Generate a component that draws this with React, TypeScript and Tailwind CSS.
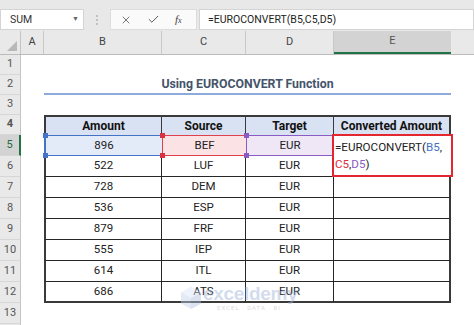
import { X, Check } from "lucide-react";

const data = [
  ["896", "BEF"],
  ["522", "LUF"],
  ["728", "DEM"],
  ["536", "ESP"],
  ["879", "FRF"],
  ["555", "IEP"],
  ["614", "ITL"],
  ["686", "ATS"],
];

const font = { fontFamily: "Roboto, 'Liberation Sans', sans-serif" };

function RowHead({ n, active, h }: { n?: number; active?: boolean; h: string }) {
  return (
    <div
      className={`${h} w-[21px] shrink-0 flex items-center justify-center border-b border-[#d6d6d6] text-[11px] ${
        active
          ? "bg-[#d3d3d3] text-[#1e6b41] border-r-2 border-r-[#217346]"
          : "bg-[#e9e9e9] text-[#555] border-r border-r-[#c4c4c4]"
      }`}
    >
      {n}
    </div>
  );
}

function Corner({ color, pos }: { color: string; pos: "tl" | "bl" }) {
  return (
    <span
      className={`absolute left-[-3px] h-[5px] w-[5px] ${color} ${
        pos === "tl" ? "top-[-3px]" : "bottom-[-3px]"
      }`}
    />
  );
}

export default function App() {
  const emptyRow = (key: number, h: string, n?: number) => (
    <div key={key} className="flex">
      <RowHead n={n} h={h} />
      <div className={`${h} flex-1 bg-white`} />
    </div>
  );

  return (
    <div className="relative h-[325px] w-[474px] overflow-hidden bg-white" style={font}>
      {/* formula bar */}
      <div className="flex h-[31px] items-end bg-[#e8e8e8] pb-[1px]">
        <div className="flex h-[21px] w-[84px] items-center justify-between border border-[#d4d4d4] bg-white pl-[9px] pr-[4px] text-[10.5px] text-[#333]">
          SUM
          <span className="text-[7px] text-[#666]">▼</span>
        </div>
        <div className="flex h-[21px] w-[26px] flex-col items-center justify-center gap-[2px]">
          <span className="h-[2px] w-[2px] rounded-full bg-[#b5b5b5]" />
          <span className="h-[2px] w-[2px] rounded-full bg-[#b5b5b5]" />
          <span className="h-[2px] w-[2px] rounded-full bg-[#b5b5b5]" />
        </div>
        <div className="flex h-[21px] w-[87px] items-center border border-[#dcdcdc] bg-[#fafafa] pl-[9px] text-[#555]">
          <X size={12} strokeWidth={1.6} />
          <Check size={13} strokeWidth={1.8} className="ml-[15px]" />
          <span
            className="ml-[15px] text-[11px] italic text-[#444]"
            style={{ fontFamily: "'Liberation Serif', serif" }}
          >
            f<span className="text-[8px]">x</span>
          </span>
        </div>
        <div className="ml-[2px] flex h-[21px] flex-1 items-center border border-[#d4d4d4] bg-white pl-[8px] text-[10.5px] text-[#222]">
          =EUROCONVERT(B5,C5,D5)
        </div>
      </div>

      {/* column headers */}
      <div className="flex h-[24px] border-b border-[#bcbcbc] bg-[#e9e9e9] text-[11px] text-[#444]">
        <div className="relative w-[21px] border-r border-[#c4c4c4]">
          <svg className="absolute bottom-[3px] right-[3px]" width="10" height="10" viewBox="0 0 10 10">
            <polygon points="10,0 10,10 0,10" fill="#b8b8b8" />
          </svg>
        </div>
        <div className="flex w-[23px] items-center justify-center border-r border-[#c8c8c8]">A</div>
        <div className="flex w-[118px] items-center justify-center border-r border-[#c8c8c8]">B</div>
        <div className="flex w-[84px] items-center justify-center border-r border-[#c8c8c8]">C</div>
        <div className="flex w-[88px] items-center justify-center border-r border-[#c8c8c8]">D</div>
        <div className="flex w-[117px] items-center justify-center border-b-2 border-b-[#217346] bg-[#d3d3d3] text-[#555]">
          E
        </div>
        <div className="flex-1" />
      </div>

      {/* rows 1-3 */}
      {emptyRow(1, "h-[20px]", 1)}
      <div className="flex">
        <RowHead n={2} h="h-[20px]" />
        <div className="h-[20px] w-[23px]" />
        <div className="flex h-[20px] w-[407px] items-center justify-center border-b-2 border-[#8eaadb] pt-[1px] text-[12.3px] font-bold text-[#44546a]">
          Using EUROCONVERT Function
        </div>
        <div className="flex-1" />
      </div>
      {emptyRow(3, "h-[20px]", 3)}

      {/* table header row 4 */}
      <div className="flex text-[12px] font-bold text-[#111]">
        <RowHead n={4} h="h-[20px]" />
        <div className="h-[20px] w-[23px]" />
        <div className="flex h-[20px] w-[118px] items-center justify-center border-t-2 border-l-2 border-r border-[#3a3a3a] bg-[#d9e2f3]">
          Amount
        </div>
        <div className="flex h-[20px] w-[84px] items-center justify-center border-t-2 border-r border-[#3a3a3a] bg-[#d9e2f3]">
          Source
        </div>
        <div className="flex h-[20px] w-[88px] items-center justify-center border-t-2 border-r border-[#3a3a3a] bg-[#d9e2f3]">
          Target
        </div>
        <div className="flex h-[20px] w-[117px] items-center justify-center border-t-2 border-r-2 border-[#3a3a3a] bg-[#d9e2f3]">
          Converted Amount
        </div>
        <div className="flex-1" />
      </div>

      {/* data rows 5-12 */}
      {data.map(([amt, src], i) => {
        const n = i + 5;
        const first = i === 0;
        const last = i === data.length - 1;
        const bb = last ? "border-b-2 border-b-[#3a3a3a]" : "border-b border-b-[#262626]";
        return (
          <div key={n} className="flex text-[11.5px] text-[#222]">
            <RowHead n={n} h="h-[21px]" active={first} />
            <div className="h-[21px] w-[23px]" />
            {first ? (
              <>
                <div className="relative flex h-[21px] w-[118px] items-center justify-center border-y border-l-2 border-[#4472c4] bg-[#e3ebf8]">
                  {amt}
                  <Corner color="bg-[#4472c4]" pos="tl" />
                  <Corner color="bg-[#4472c4]" pos="bl" />
                </div>
                <div className="relative flex h-[21px] w-[84px] items-center justify-center border-y border-l border-[#e0404c] bg-[#fbe3e5]">
                  {src}
                  <Corner color="bg-[#d93343]" pos="tl" />
                  <Corner color="bg-[#d93343]" pos="bl" />
                </div>
                <div className="relative flex h-[21px] w-[88px] items-center justify-center border border-[#8a5bc2] bg-[#efe7f6]">
                  EUR
                  <Corner color="bg-[#8a5bc2]" pos="tl" />
                  <Corner color="bg-[#8a5bc2]" pos="bl" />
                </div>
                <div className="h-[21px] w-[117px] border-r-2 border-b border-[#3a3a3a]" />
              </>
            ) : (
              <>
                <div className={`flex h-[21px] w-[118px] items-center justify-center border-l-2 border-l-[#3a3a3a] border-r border-r-[#262626] ${bb}`}>
                  {amt}
                </div>
                <div className={`flex h-[21px] w-[84px] items-center justify-center border-r border-r-[#262626] ${bb}`}>
                  {src}
                </div>
                <div className={`flex h-[21px] w-[88px] items-center justify-center border-r border-r-[#262626] ${bb}`}>
                  EUR
                </div>
                <div className={`h-[21px] w-[117px] border-r-2 border-r-[#3a3a3a] ${bb}`} />
              </>
            )}
            <div className="flex-1" />
          </div>
        );
      })}

      {emptyRow(13, "h-[21px]", 13)}
      {emptyRow(14, "h-[21px]")}

      {/* in-cell editor on E5 */}
      <div className="absolute left-[332px] top-[134px] h-[43px] w-[121px] border-2 border-[#e3262f] bg-white pl-[1px] text-[11.6px] leading-[17px] text-[#222]">
        <div className="pt-[3px]">
          =EUROCONVERT(<span className="text-[#4472c4]">B5</span>,
        </div>
        <div>
          <span className="text-[#d93343]">C5</span>,<span className="text-[#8a5bc2]">D5</span>)
        </div>
      </div>

      {/* watermark */}
      <div className="pointer-events-none absolute left-[180px] top-[284px] flex items-start opacity-45">
        <svg width="22" height="24" viewBox="0 0 22 24" className="mt-[2px]">
          <polygon points="11,1 21,6.5 21,17.5 11,23 1,17.5 1,6.5" fill="#c5d2ea" />
          <polygon points="11,1 21,6.5 11,12 1,6.5" fill="#dbe4f4" />
          <polygon points="11,12 21,6.5 21,17.5 11,23" fill="#aebfe0" />
        </svg>
        <div className="ml-[1px] flex flex-col items-start">
          <span
            className="text-[19px] font-bold leading-[20px] tracking-[-0.3px] text-[#9fb2d8]"
            style={{ fontFamily: "'Liberation Sans', sans-serif" }}
          >
            exceldemy
          </span>
          <span className="ml-[14px] text-[6px] leading-[7px] tracking-[1px] text-[#b0b0b0]">
            EXCEL · DATA · BI
          </span>
        </div>
      </div>
    </div>
  );
}
